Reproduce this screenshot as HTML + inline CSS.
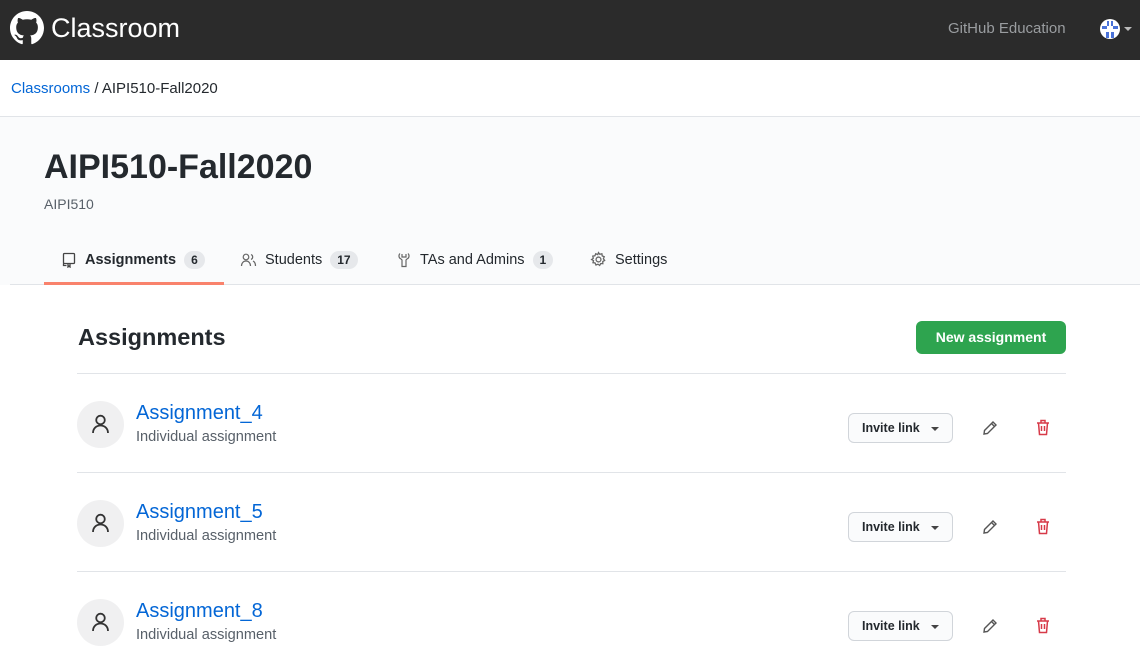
<!DOCTYPE html>
<html><head><meta charset="utf-8"><style>
*{box-sizing:border-box;margin:0;padding:0}
body{width:1140px;height:660px;overflow:hidden;font-family:"Liberation Sans",Arial,sans-serif;background:#fff;color:#24292e;position:relative}
.hdr{position:absolute;left:0;top:0;width:1140px;height:60px;background:#2b2b2b}
.abs{position:absolute}
.gray{position:absolute;left:0;top:116px;width:1140px;height:169px;background:#fafbfc;border-top:1px solid #e1e4e8}
.tabline{position:absolute;left:10px;top:284px;width:1130px;height:1px;background:#e1e4e8}
.tab{position:absolute;top:251px;font-size:14.5px;display:flex;align-items:center;gap:8px;color:#24292e}
.cnt{display:inline-block;background:#e6e8eb;border-radius:10px;font-size:12px;padding:2px 7px;font-weight:bold;color:#24292e}
.row{position:absolute;left:77px;width:989px;height:99px;border-top:1px solid #e1e4e8}
.av{position:absolute;left:0;top:27px;width:47px;height:47px;border-radius:50%;background:#f0f0f1}
.t{position:absolute;left:59px;top:28px;font-size:20px;color:#0366d6}
.s{position:absolute;left:59px;top:55px;font-size:14.6px;color:#586069}
.inv{position:absolute;left:771px;top:39px;width:105px;height:30px;border:1px solid #d1d5da;border-radius:6px;background:#fafbfc;font-size:12.5px;font-weight:bold;padding:7px 0 0 13px}
.car{position:absolute;right:13px;top:13px;border:4px solid transparent;border-top:4px solid #444;border-bottom:0}
</style></head><body>
<div class="hdr">
<svg class="abs" style="left:10px;top:11px" width="34" height="34" viewBox="0 0 16 16"><path fill="#fff" d="M8 0C3.58 0 0 3.58 0 8c0 3.540 2.29 6.53 5.470 7.59.4.07.55-.17.55-.38 0-.19-.01-.82-.01-1.49-2.01.37-2.53-.49-2.69-.94-.09-.23-.48-.94-.82-1.130-.28-.15-.68-.52-.01-.53.63-.01 1.080.58 1.230.82.72 1.21 1.870.87 2.330.66.07-.52.28-.87.51-1.07-1.78-.2-3.640-.89-3.640-3.95 0-.87.31-1.59.82-2.15-.08-.2-.36-1.020.08-2.12 0 0 .67-.21 2.2.82.64-.18 1.320-.27 2-.27.68 0 1.360.09 2 .27 1.530-1.04 2.2-.82 2.2-.82.44 1.1.16 1.920.08 2.12.51.56.82 1.270.82 2.15 0 3.07-1.870 3.75-3.650 3.95.29.25.54.73.54 1.48 0 1.07-.01 1.93-.01 2.2 0 .21.15.46.55.38A8.013 8.013 0 0016 8c0-4.42-3.58-8-8-8z"/></svg>
<div class="abs" style="left:51px;top:13px;font-size:27px;color:#fff">Classroom</div>
<div class="abs" style="left:948px;top:20px;font-size:15px;color:#9a9da0">GitHub Education</div>
<svg class="abs" style="left:1099px;top:18px" width="22" height="22" viewBox="0 0 22 22"><circle cx="11" cy="11" r="10" fill="#fff"/><rect x="3" y="8" width="5" height="3" fill="#4a72d8"/><rect x="14" y="8" width="5" height="3" fill="#4a72d8"/><rect x="8" y="3" width="2" height="5" fill="#4a72d8"/><rect x="12" y="3" width="2" height="5" fill="#4a72d8"/><rect x="7" y="14" width="3" height="6" fill="#4a72d8"/><rect x="12" y="14" width="3" height="6" fill="#4a72d8"/></svg>
<div class="abs" style="left:1124px;top:27px;border:4px solid transparent;border-top:4px solid #bbb;border-bottom:0"></div>
</div>
<div class="abs" style="left:11px;top:80px;font-size:15px"><span style="color:#0366d6">Classrooms</span> / AIPI510-Fall2020</div>
<div class="gray"></div>
<div class="abs" style="left:44px;top:148px;font-size:34px;font-weight:bold">AIPI510-Fall2020</div>
<div class="abs" style="left:44px;top:196px;font-size:14px;color:#586069">AIPI510</div>
<div class="tab" style="left:61px;font-weight:bold"><svg width="16" height="16" viewBox="0 0 16 16" fill="none" stroke="#444" stroke-width="1.3"><rect x="2.5" y="1.5" width="11" height="10" rx="1"/><path d="M2.5 11.5v2h3M7 11.5v3.5l1-1 1 1v-3.5"/></svg>Assignments <span class="cnt">6</span></div>
<div class="tab" style="left:240px"><svg width="17" height="16" viewBox="0 0 17 16" fill="none" stroke="#666" stroke-width="1.2"><circle cx="6" cy="5" r="2.8"/><path d="M1.5 14c0-3 2-5 4.5-5s4.5 2 4.5 5M11 2.5a2.7 2.7 0 010 5M13 9c1.5.8 2.5 2.6 2.5 5"/></svg>Students <span class="cnt">17</span></div>
<div class="tab" style="left:396px"><svg width="16" height="16" viewBox="0 0 16 16" fill="none" stroke="#666" stroke-width="1.2"><path d="M4 1.5C2.5 3 2.5 6 5 7l1 1v6.5h4V8l1-1c2.5-1 2.5-4 1-5.5M6 2v3h4V2"/></svg>TAs and Admins <span class="cnt">1</span></div>
<div class="tab" style="left:590px"><svg width="17" height="17" viewBox="0 0 16 16" fill="none" stroke="#666" stroke-width="1.2"><circle cx="8" cy="8" r="2.3"/><path d="M8 1.5l1.2 1.6 2-.5.3 2 1.9.8-.8 1.9 1.2 1.6-1.8 1 .1 2-2-.1-1 1.8-1.6-1.2-1.9.8-.8-1.9-2-.3.5-2L1.5 8l1.6-1.2-.5-2 2-.3.8-1.9 1.9.8z"/></svg>Settings</div>
<div class="tabline"></div>
<div class="abs" style="left:44px;top:282px;width:180px;height:3px;background:#f9826c"></div>
<div class="abs" style="left:78px;top:324px;font-size:23.5px;font-weight:bold">Assignments</div>
<div class="abs" style="left:916px;top:321px;width:150px;height:33px;background:#2ea44f;border-radius:6px;color:#fff;font-size:14px;font-weight:bold;text-align:center;line-height:33px">New assignment</div>

<div class="row" style="top:373px"><div class="av"><svg style="position:absolute;left:14px;top:13px" width="19" height="20" viewBox="0 0 19 20" fill="none" stroke="#333" stroke-width="1.8"><circle cx="9.5" cy="6" r="4.3"/><path d="M2 19c0-4.5 3.3-7.5 7.5-7.5S17 14.5 17 19"/></svg></div><div class="t">Assignment_4</div><div class="s">Individual assignment</div><div class="inv">Invite link<span class="car"></span></div><svg class="abs" style="left:905px;top:46px" width="16" height="16" viewBox="0 0 16 16" fill="none" stroke="#555" stroke-width="1.4"><path d="M11 2l3 3-8.5 8.5L2 14l.5-3.5z M9.5 3.5l3 3"/></svg><svg class="abs" style="left:959px;top:45px" width="14" height="17" viewBox="0 0 14 17" fill="none" stroke="#d73a49" stroke-width="1.5"><path d="M1 4h12M5 4V1.5h4V4M2.5 4l1 11.5h7l1-11.5M5.5 7v5M8.5 7v5"/></svg></div>
<div class="row" style="top:472px"><div class="av"><svg style="position:absolute;left:14px;top:13px" width="19" height="20" viewBox="0 0 19 20" fill="none" stroke="#333" stroke-width="1.8"><circle cx="9.5" cy="6" r="4.3"/><path d="M2 19c0-4.5 3.3-7.5 7.5-7.5S17 14.5 17 19"/></svg></div><div class="t">Assignment_5</div><div class="s">Individual assignment</div><div class="inv">Invite link<span class="car"></span></div><svg class="abs" style="left:905px;top:46px" width="16" height="16" viewBox="0 0 16 16" fill="none" stroke="#555" stroke-width="1.4"><path d="M11 2l3 3-8.5 8.5L2 14l.5-3.5z M9.5 3.5l3 3"/></svg><svg class="abs" style="left:959px;top:45px" width="14" height="17" viewBox="0 0 14 17" fill="none" stroke="#d73a49" stroke-width="1.5"><path d="M1 4h12M5 4V1.5h4V4M2.5 4l1 11.5h7l1-11.5M5.5 7v5M8.5 7v5"/></svg></div>
<div class="row" style="top:571px"><div class="av"><svg style="position:absolute;left:14px;top:13px" width="19" height="20" viewBox="0 0 19 20" fill="none" stroke="#333" stroke-width="1.8"><circle cx="9.5" cy="6" r="4.3"/><path d="M2 19c0-4.5 3.3-7.5 7.5-7.5S17 14.5 17 19"/></svg></div><div class="t">Assignment_8</div><div class="s">Individual assignment</div><div class="inv">Invite link<span class="car"></span></div><svg class="abs" style="left:905px;top:46px" width="16" height="16" viewBox="0 0 16 16" fill="none" stroke="#555" stroke-width="1.4"><path d="M11 2l3 3-8.5 8.5L2 14l.5-3.5z M9.5 3.5l3 3"/></svg><svg class="abs" style="left:959px;top:45px" width="14" height="17" viewBox="0 0 14 17" fill="none" stroke="#d73a49" stroke-width="1.5"><path d="M1 4h12M5 4V1.5h4V4M2.5 4l1 11.5h7l1-11.5M5.5 7v5M8.5 7v5"/></svg></div>
</body></html>
